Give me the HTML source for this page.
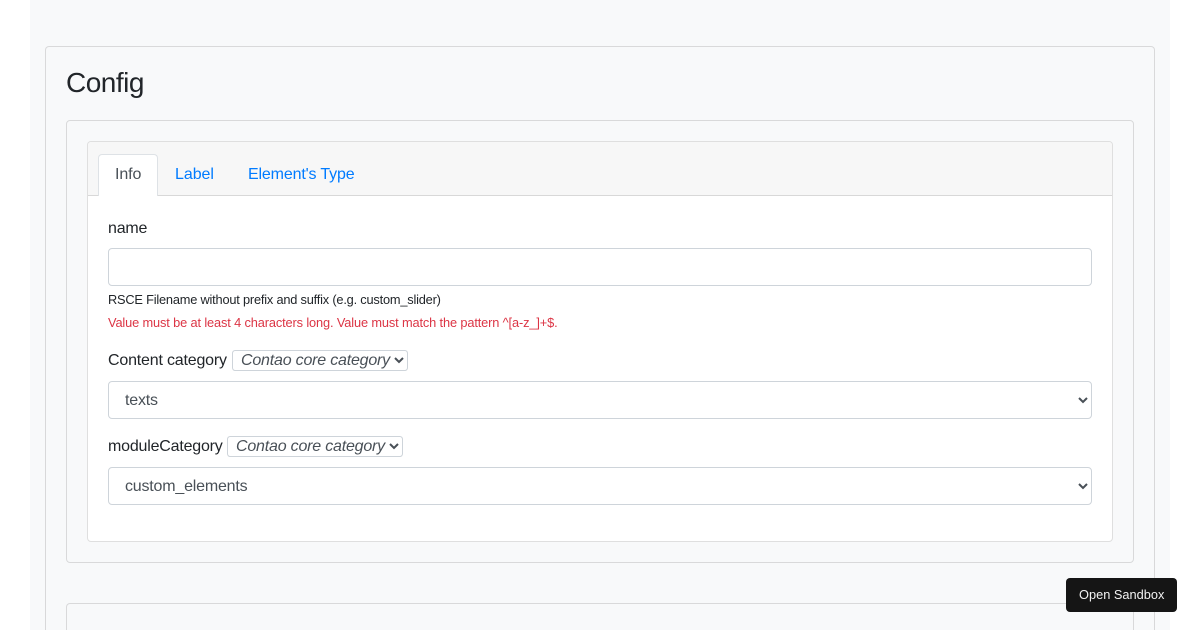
<!DOCTYPE html>
<html>
<head>
<meta charset="utf-8">
<style>
*{box-sizing:border-box}
html,body{margin:0;padding:0;width:1200px;height:630px;overflow:hidden;background:#fff}
body{font-family:"Liberation Sans",sans-serif;font-size:16px;line-height:24px;color:#212529;position:relative}
.a{position:absolute}
.t{position:absolute;white-space:nowrap}
.card{position:absolute;border:1px solid rgba(0,0,0,.125);border-radius:4px}
.open{border-bottom:0;border-radius:4px 4px 0 0}
select{position:absolute;font-family:"Liberation Sans",sans-serif;margin:0;background:#fff;color:#495057;border:1px solid #ced4da;border-radius:4px;font-size:16px;letter-spacing:-.2px}
.big{left:108px;width:984px;height:38px;padding:6px 12px;line-height:24px}
.mini{height:21px;padding:0;font-style:italic;border-radius:3.2px;font-size:16px;line-height:19px}
</style>
</head>
<body>
<div class="a" style="left:30px;top:0;width:1140px;height:630px;background:#f8f9fa"></div>
<div class="card open" style="left:45px;top:46px;width:1110px;height:584px"></div>
<div class="t" style="left:66px;top:64px;font-size:28px;line-height:38px;font-weight:400;letter-spacing:-.5px">Config</div>
<div class="card" style="left:66px;top:120px;width:1068px;height:443px"></div>
<div class="card open" style="left:66px;top:603px;width:1068px;height:27px"></div>

<div class="card" style="left:87px;top:141px;width:1026px;height:401px;background:#fff">
  <div class="a" style="left:0;top:0;width:1024px;height:54px;background:#f7f7f7;border-bottom:1px solid rgba(0,0,0,.125);border-radius:3px 3px 0 0"></div>
</div>
<div class="a" style="left:98px;top:154px;width:60px;height:42px;background:#fff;border:1px solid #dee2e6;border-bottom:0;border-radius:4px 4px 0 0"></div>
<div class="t" style="left:115px;top:163px;color:#495057;letter-spacing:-.1px">Info</div>
<div class="t" style="left:175px;top:163px;color:#007bff;letter-spacing:-.05px">Label</div>
<div class="t" style="left:248px;top:163px;color:#007bff;letter-spacing:-.15px">Element's Type</div>

<div class="t" style="left:108px;top:217px;letter-spacing:-.2px">name</div>
<input class="a" style="left:108px;top:248px;width:984px;height:38px;border:1px solid #ced4da;border-radius:4px;background:#fff;margin:0;padding:6px 12px">
<div class="t" style="left:108px;top:290px;font-size:12.8px;line-height:19px;letter-spacing:-.2px">RSCE Filename without prefix and suffix (e.g. custom_slider)</div>
<div class="t" style="left:108px;top:314px;font-size:12.8px;line-height:18px;color:#dc3545;letter-spacing:-.135px">Value must be at least 4 characters long. Value must match the pattern ^[a-z_]+$.</div>

<div class="t" style="left:108px;top:349px;letter-spacing:-.19px">Content category</div>
<select class="mini" style="left:232px;top:350px;width:176px;padding-left:4px"><option>Contao core category</option></select>
<select class="big" style="top:381px"><option>texts</option></select>

<div class="t" style="left:108px;top:435px;letter-spacing:-.2px">moduleCategory</div>
<select class="mini" style="left:227px;top:436px;width:176px;padding-left:4px"><option>Contao core category</option></select>
<select class="big" style="top:467px"><option>custom_elements</option></select>

<div class="a" style="left:1066px;top:578px;width:111px;height:34px;background:#151515;border-radius:4px"></div>
<div class="t" style="left:1079px;top:585px;font-size:12.8px;line-height:19px;color:#f2f2f2">Open Sandbox</div>
</body>
</html>
